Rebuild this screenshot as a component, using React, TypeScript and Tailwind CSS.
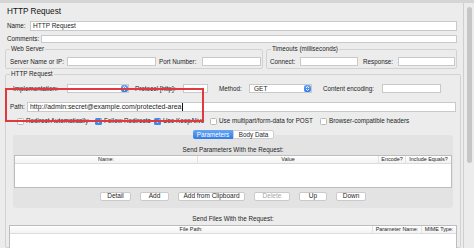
import React from "react";

function Stepper() {
  return (
    <span className="flex h-full w-[7px] shrink-0 items-center justify-center rounded-[2px] bg-linear-to-b from-[#6caaf5] to-[#2f78e4]">
      <svg width="5" height="7" viewBox="0 0 5 7">
        <path d="M1 3 L2.5 1.5 L4 3 M1 4 L2.5 5.5 L4 4" stroke="white" strokeWidth="0.9" fill="none" />
      </svg>
    </span>
  );
}

function Check({ on }: { on?: boolean }) {
  if (on) {
    return (
      <span className="flex h-[7px] w-[7px] shrink-0 items-center justify-center rounded-[1.5px] bg-[#3f8be9]">
        <svg width="6" height="6" viewBox="0 0 6 6">
          <path d="M1 3.1 L2.4 4.5 L5 1.4" stroke="white" strokeWidth="1" fill="none" />
        </svg>
      </span>
    );
  }
  return <span className="h-[7px] w-[7px] shrink-0 rounded-[1.5px] border border-[#b9b9b9] bg-white" />;
}

const input = "h-full border border-[#c9c9c9] bg-white";
const btn =
  "flex h-full items-center justify-center rounded-[2px] border border-[#cacaca] bg-white text-[6.5px] leading-none";

export default function App() {
  return (
    <div className="relative flex h-[248px] w-[474px] flex-col overflow-hidden bg-[#ececec] font-['Liberation_Sans',Arial,sans-serif] text-[6.3px] text-[#1e1e1e]">
      <div className="h-[3px] shrink-0 bg-[#d5d5d5]" />
      <div className="flex min-h-0 flex-1">
        {/* Main panel */}
        <div className="flex w-[464px] shrink-0 flex-col border-r border-[#cfcfcf]">
          <div className="mt-[3px] h-[12px] pl-[7px] text-[8.2px] leading-[12px] text-[#111]">HTTP Request</div>

          <div className="mt-[3px] flex h-[10px] items-center pl-[7px] pr-[6px]">
            <span className="w-[23px]">Name:</span>
            <div className={`${input} flex flex-1 items-center pl-[2px] text-[6.5px]`}>HTTP Request</div>
          </div>

          <div className="mt-[4px] flex h-[8px] items-center pl-[7px] pr-[6px]">
            <span className="w-[34px]">Comments:</span>
            <div className={`${input} flex-1`} />
          </div>

          {/* Web server + timeouts */}
          <div className="mt-[2px] flex gap-[3px] pl-[5px] pr-[6px]">
            <fieldset className="w-[258px] rounded-[2px] border border-[#d2d2d2]">
              <legend className="ml-[4px] px-[1px] leading-[8px]">Web Server</legend>
              <div className="mt-[4px] mb-[2px] flex h-[9px] items-center pl-[4px] pr-[1px]">
                <span className="w-[57px]">Server Name or IP:</span>
                <div className={`${input} w-[89px]`} />
                <span className="ml-[3px] w-[43px]">Port Number:</span>
                <div className={`${input} flex-1`} />
              </div>
            </fieldset>
            <fieldset className="flex-1 rounded-[2px] border border-[#d2d2d2]">
              <legend className="ml-[4px] px-[1px] leading-[8px]">Timeouts (milliseconds)</legend>
              <div className="mt-[4px] mb-[2px] flex h-[9px] items-center pl-[3px] pr-[1px]">
                <span className="w-[30px]">Connect:</span>
                <div className={`${input} w-[58px]`} />
                <span className="ml-[5px] w-[35px]">Response:</span>
                <div className={`${input} flex-1`} />
              </div>
            </fieldset>
          </div>

          {/* HTTP Request */}
          <fieldset className="mt-[1px] ml-[5px] mr-[2px] min-h-0 flex-1 rounded-[2px] border border-[#d2d2d2]">
            <legend className="ml-[4px] px-[1px] leading-[8px]">HTTP Request</legend>

            <div className="mt-[6px] flex h-[9px] items-center pl-[7px]">
              <span className="w-[54px]">Implementation:</span>
              <div className={`${input} flex w-[62px] justify-end`}>
                <Stepper />
              </div>
              <span className="ml-[6px] w-[48px]">Protocol [http]:</span>
              <div className={`${input} w-[25px]`} />
              <span className="ml-[11px] w-[30px]">Method:</span>
              <div className={`${input} flex w-[63px] items-center justify-between pl-[4px] text-[6.5px]`}>
                GET
                <Stepper />
              </div>
              <span className="ml-[11px] w-[59px]">Content encoding:</span>
              <div className={`${input} w-[59px]`} />
            </div>

            <div className="mt-[9px] flex h-[10px] items-center pl-[4px] pr-[4px]">
              <span className="w-[17px]">Path:</span>
              <div className={`${input} flex flex-1 items-center pl-[2px] text-[6.9px]`}>
                http://admin:secret@example.com/protected-area
                <span className="ml-[1px] h-[8px] w-px bg-[#111]" />
              </div>
            </div>

            <div className="mt-[5px] flex h-[8px] items-center pl-[11px]">
              <div className="flex w-[78px] items-center gap-[2px]">
                <Check />
                <span>Redirect Automatically</span>
              </div>
              <div className="flex w-[59px] items-center gap-[2px]">
                <Check on />
                <span>Follow Redirects</span>
              </div>
              <div className="flex w-[56px] items-center gap-[2px]">
                <Check on />
                <span>Use KeepAlive</span>
              </div>
              <div className="flex w-[110px] items-center gap-[2px]">
                <Check />
                <span>Use multipart/form-data for POST</span>
              </div>
              <div className="flex items-center gap-[2px]">
                <Check />
                <span>Browser-compatible headers</span>
              </div>
            </div>

            {/* Tabs */}
            <div className="relative z-10 mt-[5px] -mb-[4px] flex h-[9px] justify-center pl-[1px]">
              <div className="flex w-[40px] items-center justify-center rounded-l-[2px] bg-linear-to-b from-[#68a6f3] to-[#2f7be6] text-white">
                Parameters
              </div>
              <div className="flex w-[41px] items-center justify-center rounded-r-[2px] border border-[#cfcfcf] bg-white">
                Body Data
              </div>
            </div>

            <div className="mx-[7px] rounded-[3px] bg-[#e3e3e3] px-[1px] pt-[11px] pb-[7px]">
              <div className="text-center leading-[8px]">Send Parameters With the Request:</div>
              <div className="mt-[1px] h-[33px] border border-[#bdbdbd] bg-white">
                <div className="flex h-[8px] border-b border-[#dcdcdc] bg-linear-to-b from-white to-[#f3f3f3] text-[5.4px] leading-[7px]">
                  <div className="w-[183px] border-r border-[#e2e2e2] text-center">Name:</div>
                  <div className="w-[181px] border-r border-[#e2e2e2] text-center">Value</div>
                  <div className="w-[27px] border-r border-[#e2e2e2] text-center">Encode?</div>
                  <div className="flex-1 text-center">Include Equals?</div>
                </div>
              </div>
              <div className="mt-[4px] flex h-[9px] justify-center gap-[9px]">
                <div className={`${btn} w-[31px]`}>Detail</div>
                <div className={`${btn} w-[29px]`}>Add</div>
                <div className={`${btn} w-[67px]`}>Add from Clipboard</div>
                <div className={`${btn} w-[36px] text-[#a5a5a5]`}>Delete</div>
                <div className={`${btn} w-[28px]`}>Up</div>
                <div className={`${btn} w-[30px]`}>Down</div>
              </div>
            </div>

            <div className="mt-[7px] text-center leading-[8px]">Send Files With the Request:</div>
            <div className="mx-[3px] mt-[2px] h-[40px] border border-[#bdbdbd] bg-white">
              <div className="flex h-[8px] border-b border-[#dcdcdc] bg-linear-to-b from-white to-[#f3f3f3] text-[5.4px] leading-[7px]">
                <div className="w-[363px] border-r border-[#e2e2e2] text-center">File Path:</div>
                <div className="w-[49px] border-r border-[#e2e2e2] text-center">Parameter Name:</div>
                <div className="flex-1 text-center">MIME Type:</div>
              </div>
            </div>
          </fieldset>
        </div>

        {/* Scrollbar */}
        <div className="flex-1 pl-[3px] pt-[4px]">
          <div className="h-[156px] w-[5px] rounded-[3px] bg-[#c6c6c6]" />
        </div>
      </div>

      {/* Annotation */}
      <div className="absolute left-[5px] top-[88px] h-[34px] w-[199px] border-2 border-[#e0393e]" />
    </div>
  );
}
